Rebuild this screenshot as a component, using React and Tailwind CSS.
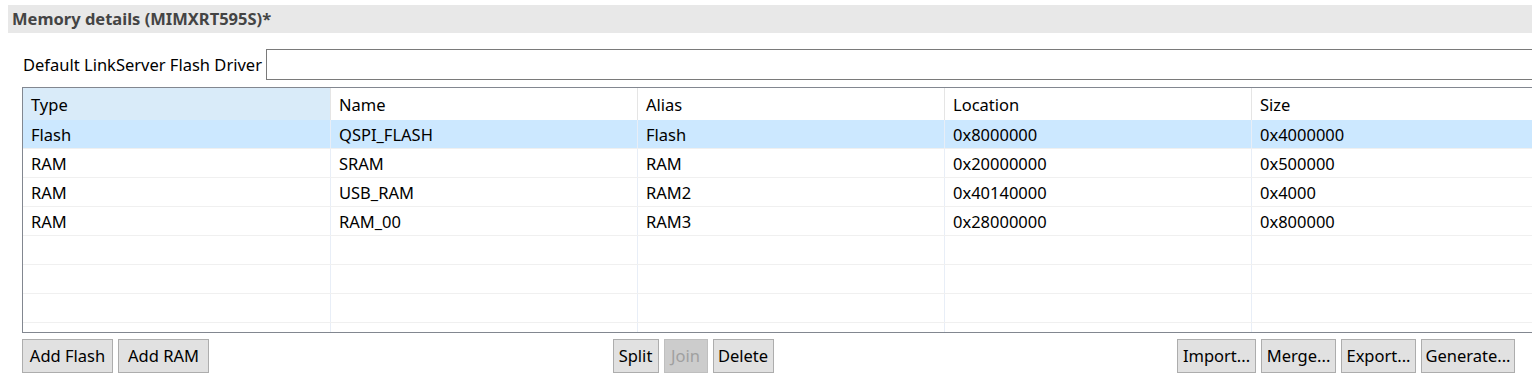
import React from 'react';

const cols = ['Type', 'Name', 'Alias', 'Location', 'Size'];

const rows = [
    ['Flash', 'QSPI_FLASH', 'Flash', '0x8000000', '0x4000000'],
    ['RAM', 'SRAM', 'RAM', '0x20000000', '0x500000'],
    ['RAM', 'USB_RAM', 'RAM2', '0x40140000', '0x4000'],
    ['RAM', 'RAM_00', 'RAM3', '0x28000000', '0x800000'],
    ['', '', '', '', ''],
    ['', '', '', '', ''],
    ['', '', '', '', ''],
];

// first column is one pixel wider so the dividers land on 330, 637, 944, 1251
const colW = ['w-[308px]', 'w-[307px]', 'w-[307px]', 'w-[307px]', 'w-[307px]'];

function Btn({ children, w, disabled }) {
    return (
        <button
            className={`h-[34px] border text-[16.5px] leading-none flex items-center justify-center whitespace-nowrap ${disabled
                ? 'bg-[#cccccc] border-[#bfbfbf] text-[#a0a0a0]'
                : 'bg-[#e1e1e1] border-[#adadad] text-black'
                } ${w}`}
        >
            {children}
        </button>
    );
}

export default function App() {
    return (
        <div className="w-[1532px] h-[392px] bg-white overflow-hidden font-['Noto_Sans',sans-serif] text-[16.5px] text-black">
            {/* Section header */}
            <div className="ml-[8px] mt-[5px] h-[28px] bg-[#e8e8e8] flex items-center pl-[4px]">
                <span className="font-bold text-[#444444]">Memory details (MIMXRT595S)*</span>
            </div>

            {/* Flash driver */}
            <div className="flex items-center mt-[16px] h-[31px]">
                <span className="ml-[23px] w-[243px] whitespace-nowrap pt-[2px]">Default LinkServer Flash Driver</span>
                <div className="flex-1 h-[31px] border border-[#7a7a7a] border-r-0 bg-white" />
            </div>

            {/* Table */}
            <div className="ml-[22px] mt-[7px] w-[1540px] h-[246px] border border-[#828790] overflow-hidden">
                <div className="flex h-[32px]">
                    {cols.map((c, i) => (
                        <div
                            key={c}
                            className={`${colW[i]} shrink-0 flex items-center pl-[8px] pt-[3px] border-r border-[#e5e5e5] ${i === 0 ? 'bg-[#d9ebf9]' : ''}`}
                        >
                            {c}
                        </div>
                    ))}
                </div>
                {rows.map((r, ri) => (
                    <div key={ri} className={`flex h-[29px] border-b border-[#f0f0f0] ${ri === 0 ? 'bg-[#cce8ff]' : ''}`}>
                        {r.map((v, ci) => (
                            <div key={ci} className={`${colW[ci]} shrink-0 flex items-center pl-[8px] pt-[3px] border-r border-[#e8eef7] whitespace-nowrap`}>
                                {v}
                            </div>
                        ))}
                    </div>
                ))}
                <div className="flex h-[9px]">
                    {cols.map((c, i) => (
                        <div key={c} className={`${colW[i]} shrink-0 border-r border-[#e8eef7]`} />
                    ))}
                </div>
            </div>

            {/* Buttons */}
            <div className="flex items-center mt-[6px] pl-[22px] pr-[17px]">
                <div className="flex gap-[5px]">
                    <Btn w="w-[91px]">Add Flash</Btn>
                    <Btn w="w-[91px]">Add RAM</Btn>
                </div>
                <div className="flex-1" />
                <div className="flex gap-[5px]">
                    <Btn w="w-[46px]">Split</Btn>
                    <Btn w="w-[44px]" disabled>Join</Btn>
                    <Btn w="w-[61px]">Delete</Btn>
                </div>
                <div className="flex-1" />
                <div className="flex gap-[5px]">
                    <Btn w="w-[79px]">Import...</Btn>
                    <Btn w="w-[75px]">Merge...</Btn>
                    <Btn w="w-[75px]">Export...</Btn>
                    <Btn w="w-[94px]">Generate...</Btn>
                </div>
            </div>
        </div>
    );
}
